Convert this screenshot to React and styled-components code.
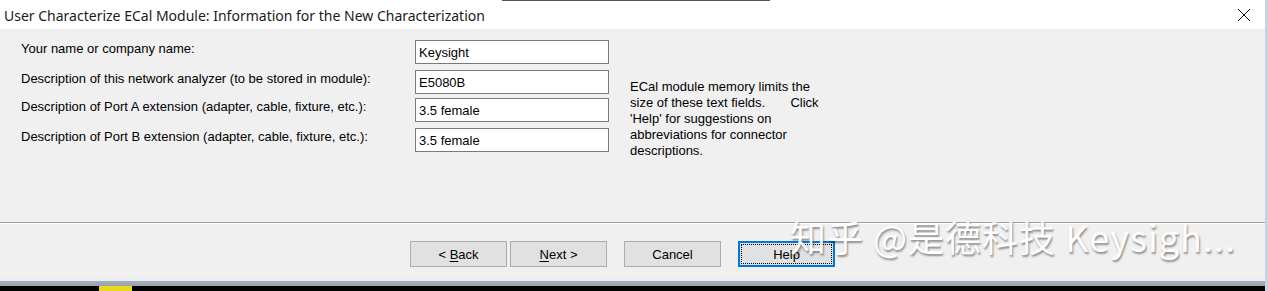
import styled, { createGlobalStyle } from 'styled-components';

const GlobalStyle = createGlobalStyle`
  html, body {
    margin: 0;
    padding: 0;
    background: #000;
  }
  * {
    box-sizing: border-box;
  }
`;

const fields = [
  { label: 'Your name or company name:', value: 'Keysight', top: 11 },
  { label: 'Description of this network analyzer (to be stored in module):', value: 'E5080B', top: 6 },
  { label: 'Description of Port A extension (adapter, cable, fixture, etc.):', value: '3.5 female', top: 4 },
  { label: 'Description of Port B extension (adapter, cable, fixture, etc.):', value: '3.5 female', top: 6 },
];

const App = () => {
  return (
    <>
      <GlobalStyle />
      <Window>
        <TitleBar>
          <Title>User Characterize ECal Module: Information for the New Characterization</Title>
          <CloseButton>
            <svg width="14" height="14" viewBox="0 0 14 14">
              <path d="M1 1 L13 13 M13 1 L1 13" stroke="#111" strokeWidth="1" fill="none" />
            </svg>
          </CloseButton>
        </TitleBar>

        <Body>
          <FormArea>
            <Fields>
              {fields.map((f) => (
                <FieldRow key={f.label} $top={f.top}>
                  <Label>{f.label}</Label>
                  <TextInput defaultValue={f.value} />
                </FieldRow>
              ))}
            </Fields>
            <Note>
              ECal module memory limits the size of these text fields.&nbsp;&nbsp;&nbsp;&nbsp;&nbsp;&nbsp; Click
              'Help' for suggestions on abbreviations for connector descriptions.
            </Note>
          </FormArea>

          <Separator />

          <ButtonRow>
            <Button>
              &lt;{' '}
              <u>B</u>ack
            </Button>
            <Button>
              <u>N</u>ext{' '}&gt;
            </Button>
            <Button $gap={17}>Cancel</Button>
            <Button $gap={17} $focused>
              Help
            </Button>
          </ButtonRow>

          <Watermark>知乎 @是德科技 Keysigh...</Watermark>
        </Body>

        <FrameEdge />
        <Taskbar>
          <TaskbarMark />
        </Taskbar>
      </Window>
    </>
  );
};

const Window = styled.div`
  width: 1268px;
  height: 291px;
  display: flex;
  flex-direction: column;
  background: #f0f0f0;
  border-right: 3px solid #c9d3df;
  overflow: hidden;
`;

const TitleBar = styled.div`
  position: relative;
  height: 29px;
  flex-shrink: 0;
  background: #fff;
  display: flex;
  align-items: center;
  justify-content: space-between;
  padding: 0 14px 0 4px;

  &::before {
    content: '';
    position: absolute;
    top: 0;
    left: 502px;
    width: 268px;
    height: 1px;
    background: #555;
  }
`;

const Title = styled.div`
  font-family: 'Noto Sans', 'Open Sans', sans-serif;
  font-size: 14px;
  color: #1a1a1a;
  padding-top: 1px;
`;

const CloseButton = styled.div`
  display: flex;
  align-items: center;
  padding-top: 1px;
`;

const Body = styled.div`
  position: relative;
  flex: 1;
  display: flex;
  flex-direction: column;
  background: #f0f0f0;
  font-family: 'Liberation Sans', Arial, sans-serif;
  font-size: 13px;
  color: #000;
`;

const FormArea = styled.div`
  display: flex;
  align-items: flex-start;
  padding-left: 21px;
  height: 193px;
`;

const Fields = styled.div`
  display: flex;
  flex-direction: column;
`;

const FieldRow = styled.div`
  display: flex;
  align-items: flex-start;
  margin-top: ${(p) => p.$top}px;
`;

const Label = styled.div`
  width: 394px;
  padding-top: 1px;
`;

const TextInput = styled.input`
  width: 194px;
  height: 24px;
  border: 1px solid #7a7a7a;
  background: #fff;
  padding: 0 3px;
  font-family: 'Liberation Sans', Arial, sans-serif;
  font-size: 13px;
  color: #000;
  outline: none;
`;

const Note = styled.div`
  width: 192px;
  margin-left: 21px;
  margin-top: 50px;
  line-height: 16px;
`;

const Separator = styled.div`
  height: 2px;
  flex-shrink: 0;
  border-top: 1px solid #a0a0a0;
  border-bottom: 1px solid #fff;
`;

const ButtonRow = styled.div`
  display: flex;
  padding-left: 410px;
  padding-top: 17px;
  gap: 3px;
`;

const Button = styled.div`
  width: 97px;
  height: 26px;
  margin-left: ${(p) => (p.$gap ? p.$gap - 3 : 0)}px;
  display: flex;
  align-items: center;
  justify-content: center;
  white-space: pre;
  background: #e1e1e1;
  border: 1px solid ${(p) => (p.$focused ? '#0078d7' : '#adadad')};
  box-shadow: ${(p) => (p.$focused ? 'inset 0 0 0 1px #0078d7' : 'none')};
  outline: ${(p) => (p.$focused ? '1px dotted #000' : 'none')};
  outline-offset: -4px;
  padding-top: 1px;

  u {
    text-decoration-thickness: 1px;
    text-underline-offset: 2px;
  }
`;

const Watermark = styled.div`
  position: absolute;
  left: 790px;
  top: 181px;
  font-family: 'Noto Sans CJK SC', 'Noto Sans', sans-serif;
  font-size: 36px;
  letter-spacing: 1px;
  color: #fff;
  text-shadow: 1px 2px 2px rgba(0, 0, 0, 0.45);
  opacity: 0.92;
  white-space: nowrap;
  pointer-events: none;
`;

const FrameEdge = styled.div`
  height: 7px;
  flex-shrink: 0;
  background: linear-gradient(to bottom, #e6edf6 0, #e6edf6 2px, #a8afb8 2px, #9aa2ab 7px);
`;

const Taskbar = styled.div`
  height: 5px;
  flex-shrink: 0;
  background: #000;
  padding-left: 99px;
  margin-right: -3px;
`;

const TaskbarMark = styled.div`
  width: 33px;
  height: 5px;
  background: #e8d91c;
`;

export default App;
